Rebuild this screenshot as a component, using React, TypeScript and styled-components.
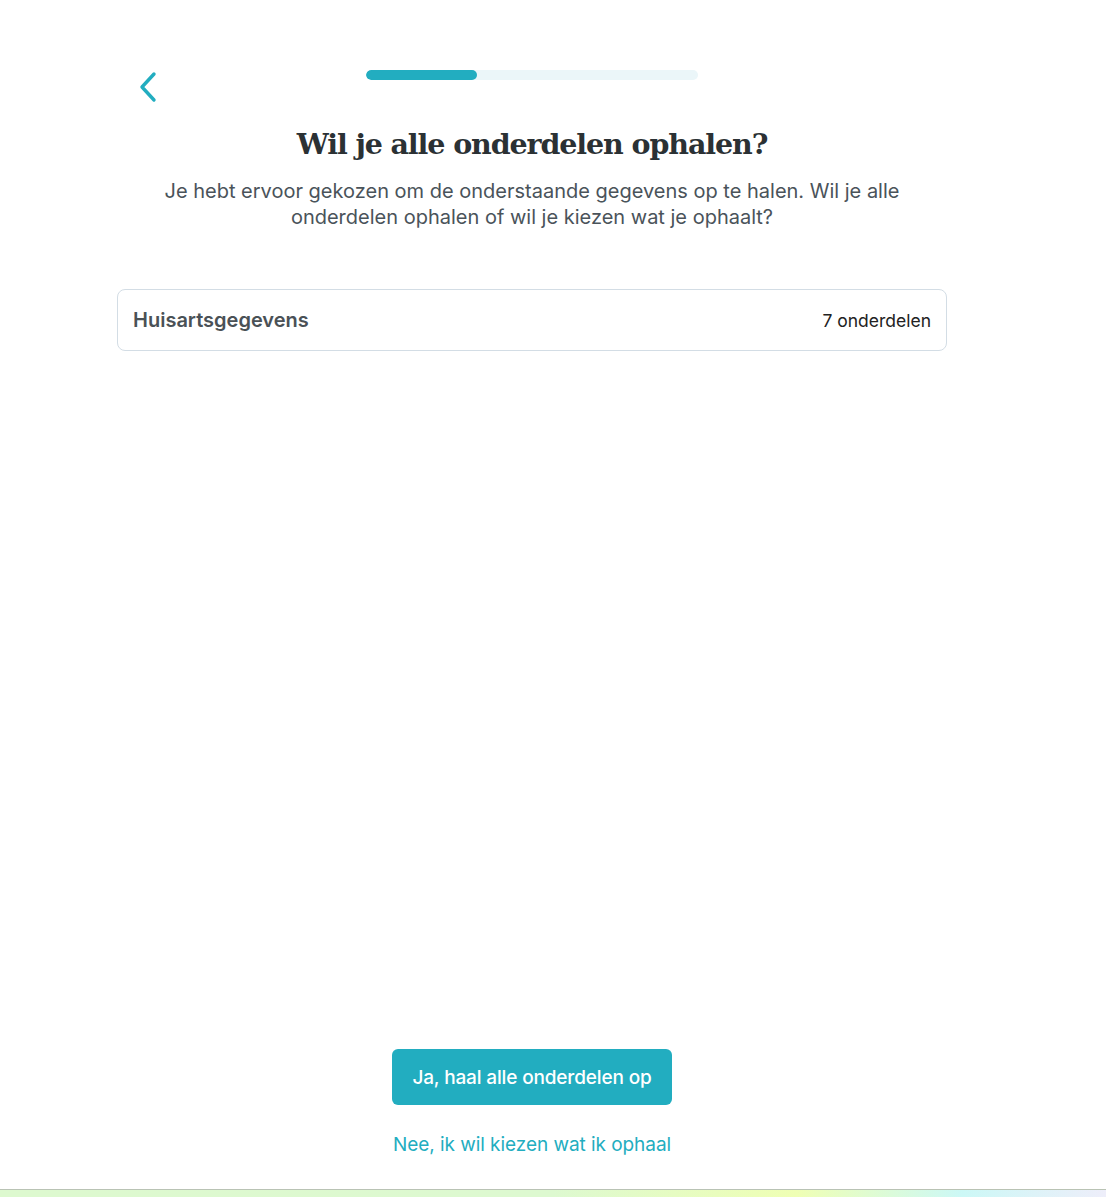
import React from 'react';
import styled, { createGlobalStyle } from 'styled-components';

const GlobalStyle = createGlobalStyle`
    html, body {
        margin: 0;
        padding: 0;
        background: #ffffff;
    }
    body {
        font-family: Inter, "Noto Sans", sans-serif;
    }
`;

const teal = '#22adc0';

const Page = styled.div`
    min-height: 100vh;
    display: flex;
    flex-direction: column;
    box-sizing: border-box;
`;

const Main = styled.main`
    flex: 1;
    display: flex;
    flex-direction: column;
    align-items: center;
    width: 1064px;
`;

const Column = styled.div`
    width: 830px;
    flex: 1;
    display: flex;
    flex-direction: column;
`;

const TopBar = styled.div`
    position: relative;
    height: 48px;
    margin-top: 70px;
    display: flex;
    justify-content: center;
`;

const BackButton = styled.button`
    position: absolute;
    left: 18px;
    top: 0;
    width: 32px;
    height: 36px;
    padding: 0;
    border: none;
    background: none;
    cursor: pointer;
`;

const Track = styled.div`
    width: 332px;
    height: 10px;
    border-radius: 5px;
    background-color: #ebf6f9;
    overflow: hidden;
`;

const Fill = styled.div`
    height: 100%;
    border-radius: 5px;
    background-color: ${teal};
`;

const Title = styled.h1`
    margin: 6px 0 0;
    font-family: "DejaVu Serif", "Liberation Serif", serif;
    font-weight: 700;
    font-size: 28.5px;
    letter-spacing: -1.1px;
    line-height: 40px;
    color: #2b3134;
    text-align: center;
`;

const Intro = styled.p`
    margin: 14px auto 0;
    max-width: 780px;
    font-size: 20px;
    line-height: 26px;
    color: #4a535a;
    text-align: center;
`;

const Card = styled.div`
    margin-top: 59px;
    height: 62px;
    box-sizing: border-box;
    border: 1px solid #d3dde5;
    border-radius: 8px;
    display: flex;
    align-items: center;
    justify-content: space-between;
    padding: 0 15px;
`;

const CardTitle = styled.span`
    font-size: 20px;
    font-weight: 600;
    color: #4a5156;
`;

const CardCount = styled.span`
    font-size: 17.5px;
    color: #222222;
`;

const Actions = styled.div`
    margin-top: auto;
    padding-bottom: 33px;
    display: flex;
    flex-direction: column;
    align-items: center;
    gap: 28px;
`;

const PrimaryButton = styled.button`
    width: 280px;
    height: 56px;
    border: none;
    border-radius: 6px;
    background-color: ${teal};
    color: #ffffff;
    font-family: Inter, "Noto Sans", sans-serif;
    font-size: 19px;
    font-weight: 500;
    letter-spacing: -0.15px;
    cursor: pointer;
`;

const LinkButton = styled.button`
    border: none;
    background: none;
    padding: 0;
    color: ${teal};
    font-family: Inter, "Noto Sans", sans-serif;
    font-size: 19px;
    letter-spacing: -0.05px;
    cursor: pointer;
`;

const Footer = styled.div`
    height: 7px;
    border-top: 1px solid #b9c3b4;
    background: linear-gradient(90deg, #ddf9cf 0%, #ddf9d0 50%, #efffb4 72%, #ccf8f6 87%, #eeeefa 100%);
`;

export default function App() {
    const step = 1;
    const total = 3;

    return (
        <Page>
            <GlobalStyle />
            <Main>
                <Column>
                    <TopBar>
                        <BackButton aria-label="Terug">
                            <svg width="32" height="36" viewBox="0 0 32 36" fill="none">
                                <path d="M19 4 L7 17 L19 30" stroke={teal} strokeWidth="3.4" strokeLinecap="round" strokeLinejoin="round" />
                            </svg>
                        </BackButton>
                        <Track>
                            <Fill style={{ width: `${(step / total) * 100}%` }} />
                        </Track>
                    </TopBar>
                    <Title>Wil je alle onderdelen ophalen?</Title>
                    <Intro>
                        Je hebt ervoor gekozen om de onderstaande gegevens op te halen. Wil je alle onderdelen ophalen of wil je kiezen wat je ophaalt?
                    </Intro>
                    <Card>
                        <CardTitle>Huisartsgegevens</CardTitle>
                        <CardCount>7 onderdelen</CardCount>
                    </Card>
                    <Actions>
                        <PrimaryButton>Ja, haal alle onderdelen op</PrimaryButton>
                        <LinkButton>Nee, ik wil kiezen wat ik ophaal</LinkButton>
                    </Actions>
                </Column>
            </Main>
            <Footer />
        </Page>
    );
}
